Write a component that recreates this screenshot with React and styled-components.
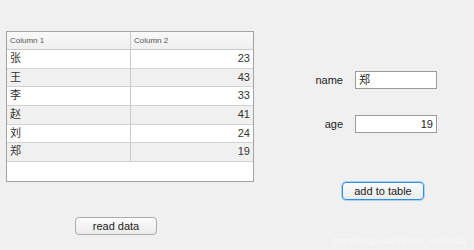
import React from "react";
import styled, { createGlobalStyle } from "styled-components";

const rows = [
  ["张", 23],
  ["王", 43],
  ["李", 33],
  ["赵", 41],
  ["刘", 24],
  ["郑", 19],
];

const Global = createGlobalStyle`
  html, body {
    margin: 0;
    padding: 0;
    background: #f0f0f0;
  }
  body {
    font-family: "Liberation Sans", "Noto Sans CJK SC", Arial, sans-serif;
    color: #222;
  }
`;

function App() {
  return (
    <Page>
      <Global />
      <LeftCol>
        <Table>
          <HeadRow>
            <HeadCell>Column 1</HeadCell>
            <HeadCell>Column 2</HeadCell>
          </HeadRow>
          {rows.map(([name, age], i) => (
            <Row key={name} striped={i % 2 === 1}>
              <NameCell>{name}</NameCell>
              <AgeCell>{age}</AgeCell>
            </Row>
          ))}
        </Table>
        <ReadBtn>read data</ReadBtn>
      </LeftCol>
      <RightCol>
        <Form>
          <Label>name</Label>
          <Field>郑</Field>
          <Label>age</Label>
          <Field align="right">19</Field>
        </Form>
        <AddBtn>add to table</AddBtn>
        <Watermark>https://blog.csdn.net/m0_49571612</Watermark>
      </RightCol>
    </Page>
  );
}

export default App;

const Page = styled.div`
  width: 474px;
  height: 250px;
  display: flex;
  overflow: hidden;
`;

const LeftCol = styled.div`
  width: 282px;
  padding: 31px 0 0 6px;
  box-sizing: border-box;
  display: flex;
  flex-direction: column;
`;

const Table = styled.div`
  width: 248px;
  height: 151px;
  box-sizing: border-box;
  border: 1px solid #a3a3a3;
  background: #fff;
`;

const HeadRow = styled.div`
  display: grid;
  grid-template-columns: 123px 1fr;
  height: 18px;
  box-sizing: border-box;
  border-bottom: 1px solid #c9c9c9;
  background: linear-gradient(#f9f9f9, #efefef);
`;

const HeadCell = styled.div`
  font-size: 8px;
  color: #555;
  line-height: 17px;
  padding-left: 3px;
  & + & {
    border-left: 1px solid #c9c9c9;
  }
`;

const Row = styled.div`
  display: grid;
  grid-template-columns: 123px 1fr;
  height: 18.7px;
  box-sizing: border-box;
  border-bottom: 1px solid #d2d2d2;
  background: ${(p) => (p.striped ? "#f0f0f0" : "#fff")};
  font-size: 11px;
  line-height: 17.7px;
`;

const NameCell = styled.div`
  padding-left: 3px;
  color: #333;
`;

const AgeCell = styled.div`
  border-left: 1px solid #c9c9c9;
  text-align: right;
  padding-right: 3px;
  color: #333;
`;

const Button = styled.div`
  width: 82px;
  height: 18px;
  box-sizing: border-box;
  border: 1px solid #acacac;
  border-radius: 4px;
  background: linear-gradient(#fbfbfb, #ececec);
  font-size: 11px;
  line-height: 16px;
  text-align: center;
  color: #222;
`;

const ReadBtn = styled(Button)`
  margin: 35px 0 0 69px;
`;

const RightCol = styled.div`
  flex: 1;
  padding-top: 71px;
  padding-left: 6px;
  display: flex;
  flex-direction: column;
  position: relative;
`;

const Form = styled.div`
  display: grid;
  grid-template-columns: 55px 82px;
  column-gap: 12px;
  row-gap: 26px;
  align-items: center;
`;

const Label = styled.div`
  font-size: 11px;
  text-align: right;
  color: #222;
`;

const Field = styled.div`
  height: 18px;
  box-sizing: border-box;
  border: 1px solid #9c9c9c;
  background: #fff;
  font-size: 11px;
  line-height: 16px;
  padding: 0 3px;
  text-align: ${(p) => p.align || "left"};
  color: #222;
`;

const AddBtn = styled(Button)`
  margin: 49px 0 0 54px;
  border: 1px solid #2e8fdc;
  box-shadow: 0 0 0 1px #a8d2f2;
`;

const Watermark = styled.div`
  position: absolute;
  left: 52px;
  bottom: 4px;
  font-size: 8.5px;
  color: #f8f8f8;
  white-space: nowrap;
`;
